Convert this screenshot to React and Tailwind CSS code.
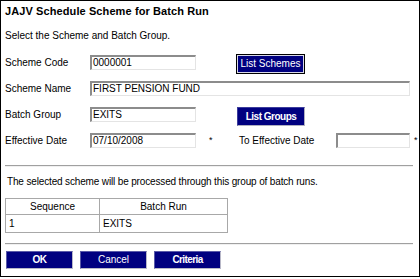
import React from "react";

const font = { fontFamily: '"Liberation Sans", Arial, sans-serif' };

function Input({ value, w }) {
  return (
    <div
      className={`${w} h-[15px] border-t-2 border-l-2 border-t-[#8c8c8c] border-l-[#8c8c8c] border-b border-r border-b-[#e4e4e4] border-r-[#e4e4e4] bg-white flex items-center pl-[1px] text-[10px] leading-none text-black whitespace-nowrap`}
    >
      {value}
    </div>
  );
}

function NavyBtn({ children, bold }) {
  return (
    <div
      className={`w-[67px] h-[18px] bg-[#000080] border border-t-[#5a5aa8] border-l-[#5a5aa8] border-b-[#b8b8c8] border-r-[#b8b8c8] flex items-center justify-center text-white text-[10px] leading-none whitespace-nowrap ${bold ? "font-bold tracking-[-0.6px]" : ""}`}
    >
      {children}
    </div>
  );
}

export default function App() {
  return (
    <div
      style={font}
      className="w-[420px] h-[277px] border border-black bg-white text-[10px] text-black flex flex-col"
    >
      <div className="mt-[4px] ml-[4px] h-[13px] leading-[13px] font-bold text-[11px] tracking-[0.1px] whitespace-nowrap">
        JAJV Schedule Scheme for Batch Run
      </div>
      <div className="mt-[11px] ml-[4px] h-[13px] leading-[13px] whitespace-nowrap">
        Select the Scheme and Batch Group.
      </div>

      <div className="mt-[13px] ml-[4px] h-[15px] flex items-start">
        <div className="w-[85px] h-[15px] flex items-center">Scheme Code</div>
        <Input value="0000001" w="w-[106px]" />
        <div className="ml-[40px] -mt-[1px] w-[69px] h-[20px] border border-black bg-[#d8d8e8] p-[1px] flex">
          <div className="flex-1 bg-[#000080] flex items-center justify-center text-white text-[10px] leading-none whitespace-nowrap">
            List Schemes
          </div>
        </div>
      </div>

      <div className="mt-[11px] ml-[4px] h-[15px] flex items-start">
        <div className="w-[85px] h-[15px] flex items-center">Scheme Name</div>
        <Input value="FIRST PENSION FUND" w="w-[320px]" />
      </div>

      <div className="mt-[11px] ml-[4px] h-[15px] flex items-start">
        <div className="w-[85px] h-[15px] flex items-center">Batch Group</div>
        <Input value="EXITS" w="w-[106px]" />
        <div className="ml-[41px] w-[68px] h-[19px] bg-[#000080] border border-t-[#3c3c9c] border-l-[#3c3c9c] border-b-[#b0b0c0] border-r-[#b0b0c0] flex items-center justify-center text-white text-[10px] font-bold tracking-[-0.5px] leading-none whitespace-nowrap">
          List Groups
        </div>
      </div>

      <div className="mt-[11px] ml-[4px] h-[15px] flex items-center">
        <div className="w-[85px] h-[15px] flex items-center">Effective Date</div>
        <Input value="07/10/2008" w="w-[106px]" />
        <div className="ml-[13px] w-[30px] text-[9px] leading-none">*</div>
        <div className="w-[97px] whitespace-nowrap">To Effective Date</div>
        <Input value="" w="w-[74px]" />
        <div className="ml-[4px] text-[9px] leading-none">*</div>
      </div>

      <div className="mt-[17px] ml-[4px] w-[408px] h-[2px] border-t border-t-[#a0a0a0] border-b border-b-[#f0f0f0]" />

      <div className="mt-[8px] ml-[6px] h-[13px] leading-[13px] tracking-[-0.15px] whitespace-nowrap">
        The selected scheme will be processed through this group of batch runs.
      </div>

      <div className="mt-[10px] ml-[4px] w-[223px] border border-[#a8a8a8]">
        <div className="flex h-[16px] border-b border-[#a8a8a8]">
          <div className="w-[94px] border-r border-[#a8a8a8] flex items-center justify-center">
            Sequence
          </div>
          <div className="flex-1 flex items-center justify-center">Batch Run</div>
        </div>
        <div className="flex h-[17px]">
          <div className="w-[94px] border-r border-[#a8a8a8] flex items-center pl-[3px]">
            1
          </div>
          <div className="flex-1 flex items-center pl-[3px]">EXITS</div>
        </div>
      </div>

      <div className="mt-[10px] ml-[4px] w-[408px] h-[2px] border-t border-t-[#a0a0a0] border-b border-b-[#f0f0f0]" />

      <div className="mt-[6px] ml-[5px] flex gap-[7px]">
        <NavyBtn bold>OK</NavyBtn>
        <NavyBtn>Cancel</NavyBtn>
        <NavyBtn bold>Criteria</NavyBtn>
      </div>
    </div>
  );
}
